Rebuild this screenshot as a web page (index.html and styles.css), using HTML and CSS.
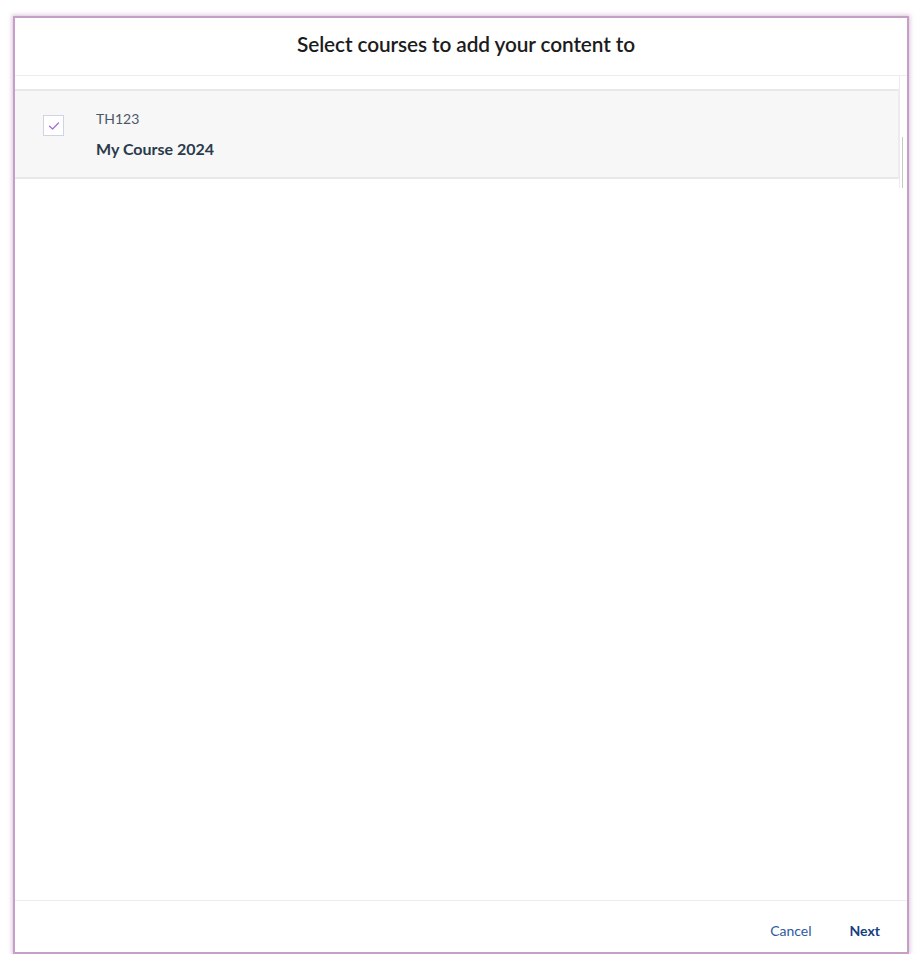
FILE: index.html
```html
<!DOCTYPE html>
<html lang="en">
<head>
<meta charset="utf-8">
<title>Select courses</title>
<link rel="stylesheet" href="styles.css">
</head>
<body>
<div class="dialog">
  <header class="dialog-header">
    <h1 class="dialog-title">Select courses to add your content to</h1>
  </header>
  <div class="dialog-body">
    <div class="list-wrap">
      <div class="course-list">
        <div class="course-row">
          <span class="checkbox">
            <svg width="12" height="10" viewBox="0 0 12 10"><path d="M1.5 5.2 L4.6 8 L10.5 2" fill="none" stroke="#a070e0" stroke-width="1.3" stroke-linecap="round" stroke-linejoin="round"/></svg>
          </span>
          <div class="course-text">
            <div class="course-code">TH123</div>
            <div class="course-name">My Course 2024</div>
          </div>
        </div>
      </div>
      <div class="scrollbar"><div class="thumb"></div></div>
    </div>
  </div>
  <footer class="dialog-footer">
    <button class="btn btn-cancel">Cancel</button>
    <button class="btn btn-next">Next</button>
  </footer>
</div>
</body>
</html>
```
FILE: styles.css
```css
* { box-sizing: border-box; }
html, body { margin: 0; padding: 0; background: #ffffff; }
body {
  padding: 16px 0 0 13px;
  font-family: Lato, "Open Sans", "Liberation Sans", sans-serif;
}
.dialog {
  width: 896px;
  height: 938px;
  border: 2px solid #c59fc5;
  box-shadow: 0 0 4px 1px rgba(185, 135, 185, 0.5);
  display: flex;
  flex-direction: column;
  background: #fff;
}
.dialog-header {
  height: 58px;
  border-bottom: 1px solid #ececf0;
  display: flex;
  align-items: center;
  justify-content: center;
  flex: none;
  padding-bottom: 6px;
  padding-left: 10px;
}
.dialog-title {
  margin: 0;
  font-size: 20.8px;
  font-weight: 600;
  color: #1c1c1c;
  letter-spacing: -0.1px;
}
.dialog-body {
  flex: 1;
  padding-top: 13px;
}
.list-wrap {
  display: flex;
  align-items: flex-start;
}
.course-list {
  width: 886px;
  border-top: 2px solid #e8e8ea;
  border-bottom: 2px solid #e8e8ea;
  border-right: 1px solid #ececef;
}
.course-row {
  height: 86px;
  background: #f7f7f7;
  display: flex;
  align-items: flex-start;
  padding-left: 28px;
}
.checkbox {
  width: 21px;
  height: 21px;
  margin-top: 24px;
  border: 1px solid #cfd3e6;
  background: #fff;
  display: flex;
  align-items: center;
  justify-content: center;
  flex: none;
}
.course-text {
  margin-left: 32px;
  margin-top: 19px;
}
.course-code {
  font-size: 14px;
  color: #4b5866;
  line-height: 18px;
}
.course-name {
  margin-top: 11px;
  font-size: 16px;
  font-weight: 700;
  color: #2a3b4c;
  line-height: 20px;
}
.scrollbar {
  width: 8px;
  margin-top: -14px;
  height: 113px;
  border-left: 1px solid #ececef;
  position: relative;
}
.thumb {
  position: absolute;
  left: 2px;
  top: 62px;
  width: 1px;
  height: 51px;
  background: #c8c8c8;
}
.dialog-footer {
  flex: none;
  height: 52px;
  border-top: 1px solid #ececf0;
  display: flex;
  align-items: center;
  justify-content: flex-end;
  padding-right: 27px;
  gap: 38px;
  padding-top: 8px;
}
.btn {
  background: none;
  border: 0;
  padding: 0;
  font-family: inherit;
  font-size: 14px;
  cursor: pointer;
}
.btn-cancel { color: #2c5aa0; }
.btn-next { color: #163f82; font-weight: 700; }
```
